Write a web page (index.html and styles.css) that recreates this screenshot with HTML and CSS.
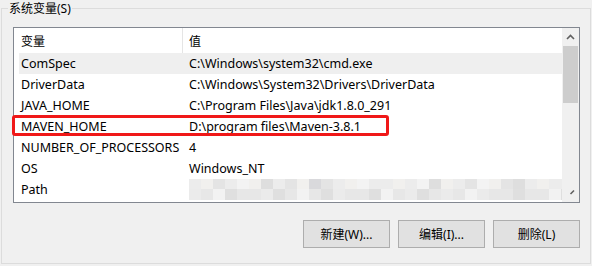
FILE: index.html
```html
<!DOCTYPE html>
<html lang="zh-CN">
<head>
<meta charset="utf-8">
<title>系统变量</title>
<link rel="stylesheet" href="styles.css">
</head>
<body>
<fieldset class="group">
  <legend class="group-title">系统变量(S)</legend>
  <div class="list">
    <div class="cols">
      <div class="header">
        <div class="h1">变量</div>
        <div class="h2">值</div>
      </div>
      <div class="row hot"><div class="c1">ComSpec</div><div class="c2">C:\Windows\system32\cmd.exe</div></div>
      <div class="row"><div class="c1">DriverData</div><div class="c2">C:\Windows\System32\Drivers\DriverData</div></div>
      <div class="row"><div class="c1">JAVA_HOME</div><div class="c2">C:\Program Files\Java\jdk1.8.0_291</div></div>
      <div class="row"><div class="c1">MAVEN_HOME</div><div class="c2">D:\program files\Maven-3.8.1</div></div>
      <div class="row"><div class="c1">NUMBER_OF_PROCESSORS</div><div class="c2">4</div></div>
      <div class="row"><div class="c1">OS</div><div class="c2">Windows_NT</div></div>
      <div class="row"><div class="c1">Path</div><div class="c2 blur">
        <div class="mosaic">
          <i></i><i></i><i></i><i></i><i></i><i></i><i></i><i></i><i></i><i></i><i></i><i></i><i></i><i></i><i></i><i></i><i></i><i></i><i></i><i></i><i></i><i></i><i></i><i></i><i></i><i></i><i></i><i></i><i></i><i></i><i></i><i></i>
          <i></i><i></i><i></i><i></i><i></i><i></i><i></i><i></i><i></i><i></i><i></i><i></i><i></i><i></i><i></i><i></i><i></i><i></i><i></i><i></i><i></i><i></i><i></i><i></i><i></i><i></i><i></i><i></i><i></i><i></i><i></i><i></i>
        </div>
      </div></div>
    </div>
    <div class="scrollbar">
      <div class="sb-btn">
        <svg width="9" height="6" viewBox="0 0 9 6"><path d="M1 5 L4.5 1.5 L8 5" fill="none" stroke="#606060" stroke-width="1.6"/></svg>
      </div>
      <div class="thumb"></div>
      <div class="track"></div>
      <div class="sb-btn sb-down">
        <svg width="9" height="6" viewBox="0 0 9 6"><path d="M4.5 5 L8 1.5" fill="none" stroke="#606060" stroke-width="1.6"/></svg>
      </div>
    </div>
    <div class="mark"></div>
  </div>
  <div class="buttons">
    <button class="btn">新建(W)...</button>
    <button class="btn">编辑(I)...</button>
    <button class="btn">删除(L)</button>
  </div>
</fieldset>
</body>
</html>
```

FILE: styles.css
```css
html, body {
  margin: 0;
  padding: 0;
  background: #f0f0f0;
  width: 592px;
  height: 266px;
  overflow: hidden;
  font-family: "Noto Sans", "Noto Sans CJK SC", sans-serif;
  font-size: 12.5px;
  color: #000;
}

.group {
  box-sizing: border-box;
  width: 590px;
  height: 264px;
  margin: 0 0 0 1px;
  padding: 0 10px 15px 11px;
  border: 1px solid #dcdcdc;
  min-width: 0;
}

.group-title {
  margin-left: -5px;
  padding: 0 1px;
  font-size: 12px;
  line-height: 17px;
  height: 17px;
}

.list {
  position: relative;
  box-sizing: border-box;
  margin-top: 10px;
  height: 176px;
  border: 1px solid #828790;
  background: #fff;
  display: flex;
}

.cols {
  flex: 1;
  min-width: 0;
  overflow: hidden;
  display: flex;
  flex-direction: column;
}

.header {
  display: flex;
  height: 25px;
  flex: none;
  align-items: stretch;
  font-size: 12px;
}

.h1 {
  box-sizing: border-box;
  width: 169px;
  flex: none;
  padding-left: 7px;
  border-right: 1px solid #e5e5e5;
  display: flex;
  align-items: center;
}

.h2 {
  padding-left: 6px;
  display: flex;
  align-items: center;
}

.row {
  display: flex;
  height: 21px;
  flex: none;
  margin-left: 5px;
  align-items: center;
  white-space: nowrap;
}

.row.hot {
  background: #efefef;
}

.c1 {
  box-sizing: border-box;
  width: 163px;
  flex: none;
  padding-left: 2px;
}

.c2 {
  padding-left: 7px;
}

.c2.blur {
  flex: 1;
  min-width: 0;
  align-self: stretch;
  display: flex;
}

.mosaic {
  flex: 1;
  min-width: 0;
  display: grid;
  grid-template-columns: repeat(32, 12px);
  grid-template-rows: 10px 11px;
  overflow: hidden;
}

.mosaic i {
  background: #ececec;
}
.mosaic i:nth-child(3n) { background: #e4e4e4; }
.mosaic i:nth-child(5n) { background: #f3f3f3; }
.mosaic i:nth-child(7n) { background: #dedede; }
.mosaic i:nth-child(11n) { background: #d9d9dc; }
.mosaic i:nth-child(4n+2) { background: #f1f0ee; }
.mosaic i:nth-child(n+33) { background: #e7e7e7; }
.mosaic i:nth-child(n+33):nth-child(3n) { background: #ebebeb; }
.mosaic i:nth-child(n+33):nth-child(4n) { background: #dfdfdf; }
.mosaic i:nth-child(n+33):nth-child(7n) { background: #f2f2f2; }

.scrollbar {
  width: 17px;
  flex: none;
  background: #f0f0f0;
  display: flex;
  flex-direction: column;
}

.sb-btn {
  height: 18px;
  flex: none;
  display: flex;
  align-items: center;
  justify-content: center;
}

.sb-down {
  height: 17px;
  padding-bottom: 3px;
  box-sizing: border-box;
}

.thumb {
  height: 57px;
  margin: 0 1px;
  background: #cdcdcd;
  flex: none;
}

.track {
  flex: 1;
}

.mark {
  position: absolute;
  left: -2px;
  top: 87px;
  width: 377px;
  height: 21px;
  box-sizing: border-box;
  border: 3px solid #f01818;
  border-radius: 3px;
}

.buttons {
  display: flex;
  justify-content: flex-end;
  gap: 8px;
  margin-top: 17px;
}

.btn {
  box-sizing: border-box;
  width: 87px;
  height: 28px;
  margin: 0;
  padding: 0;
  border: 1px solid #adadad;
  background: #e1e1e1;
  font-family: "Noto Sans", "Noto Sans CJK SC", sans-serif;
  font-size: 12px;
  color: #000;
}
```
